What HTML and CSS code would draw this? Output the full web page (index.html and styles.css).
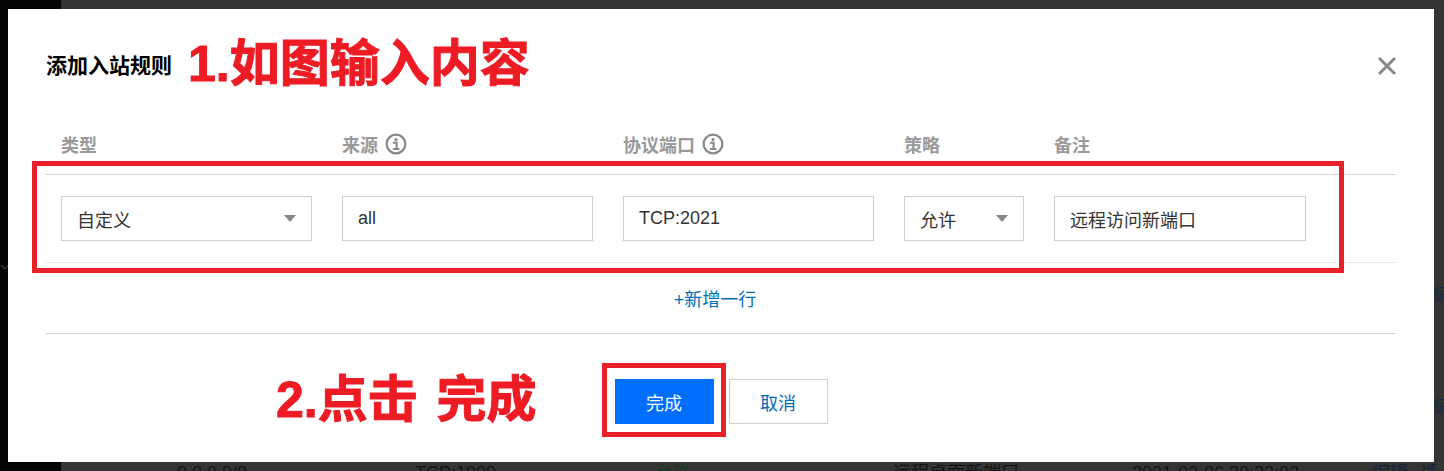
FILE: index.html
```html
<!DOCTYPE html>
<html lang="zh-CN">
<head>
  <meta charset="UTF-8" />
  <title>添加入站规则</title>
  <link rel="stylesheet" href="styles.css">
</head>
<body>
  <div class="page">
    <div class="sidebar">
      <svg class="chevron" width="10" height="6" viewBox="0 0 10 6"><path d="M1 1l4 4 4-4" fill="none" stroke="#3a3a3a" stroke-width="1.2"/></svg>
    </div>
    <div class="content">
      <div class="side-link first">编</div>
      <div class="side-link second">编</div>
      <div class="back-row">
        <span class="cell-ip">0.0.0.0/0</span>
        <span class="cell-port">TCP:1999</span>
        <span class="cell-allow">允许</span>
        <span class="cell-note">远程桌面新端口</span>
        <span class="cell-time">2021-02-06 20:23:03</span>
        <span class="cell-edit">编辑</span>
        <span class="cell-insert">插</span>
      </div>
    </div>
  </div>

  <div class="modal">
    <div class="modal-head">
      <h2>添加入站规则</h2>
      <svg class="close" width="20" height="20" viewBox="0 0 20 20"><path d="M2 2l16 16M18 2L2 18" stroke="#888" stroke-width="3"/></svg>
    </div>

    <div class="rule-grid labels">
      <div class="label">类型</div>
      <div class="label">来源 <svg class="info" width="22" height="22" viewBox="0 0 22 22"><circle cx="11" cy="11" r="9.4" fill="none" stroke="#888" stroke-width="2.2"/><circle cx="11" cy="6.6" r="1.6" fill="#888"/><path d="M8 9.8h3.6v6M8 16h6.4" fill="none" stroke="#888" stroke-width="2"/></svg></div>
      <div class="label">协议端口 <svg class="info" width="22" height="22" viewBox="0 0 22 22"><circle cx="11" cy="11" r="9.4" fill="none" stroke="#888" stroke-width="2.2"/><circle cx="11" cy="6.6" r="1.6" fill="#888"/><path d="M8 9.8h3.6v6M8 16h6.4" fill="none" stroke="#888" stroke-width="2"/></svg></div>
      <div class="label">策略</div>
      <div class="label">备注</div>
    </div>

    <div class="rule-grid inputs">
      <div class="field select">自定义<span class="caret"></span></div>
      <div class="field">all</div>
      <div class="field">TCP:2021</div>
      <div class="field select">允许<span class="caret"></span></div>
      <div class="field">远程访问新端口</div>
    </div>

    <div class="add-row"><a>+新增一行</a></div>

    <div class="modal-foot">
      <button class="btn primary">完成</button>
      <button class="btn">取消</button>
    </div>
  </div>

  <div class="note note-one">1.如图输入内容</div>
  <div class="note note-two">2.点击 完成</div>
  <div class="mark mark-row"></div>
  <div class="mark mark-btn"></div>
</body>
</html>
```

FILE: styles.css
```css
* {
  margin: 0;
  padding: 0;
  box-sizing: border-box;
}

html,
body {
  width: 1444px;
  height: 471px;
  overflow: hidden;
}

body {
  position: relative;
  background: #333;
  font-family: "Liberation Sans", "Noto Sans CJK SC", sans-serif;
  font-size: 18px;
  color: #333;
}

.page {
  display: flex;
  height: 471px;
}

.sidebar {
  position: relative;
  width: 61px;
  background: #050506;
}

.chevron {
  position: absolute;
  left: 0;
  top: 264px;
}

.content {
  position: relative;
  flex: 1;
  background: #343434;
}

.side-link {
  position: absolute;
  left: 1372px;
  color: #1c2a3c;
  font-size: 18px;
  line-height: 20px;
}

.side-link.first {
  top: 285px;
}

.side-link.second {
  top: 397px;
}

.back-row {
  position: absolute;
  left: 0;
  right: 0;
  top: 463px;
  color: #141414;
  font-size: 18px;
  line-height: 20px;
}

.back-row span {
  position: absolute;
  top: 0;
  white-space: nowrap;
}

.cell-ip { left: 116px; }
.cell-port { left: 354px; }
.cell-allow { left: 594px; color: #123a22; }
.cell-note { left: 832px; }
.cell-time { left: 1071px; }
.cell-edit { left: 1311px; color: #12253f; }
.cell-insert { left: 1359px; color: #12253f; }

.modal {
  position: absolute;
  left: 8px;
  top: 9px;
  width: 1426px;
  height: 453px;
  padding: 0 38px;
  background: #fff;
}

.modal-head {
  display: flex;
  align-items: center;
  justify-content: space-between;
  height: 110px;
}

.modal-head h2 {
  font-size: 21px;
  font-weight: 700;
  color: #000;
  margin-top: -1px;
}

.close {
  margin-top: 4px;
  margin-right: -1px;
}

.rule-grid {
  display: grid;
  grid-template-columns: 251px 251px 251px 120px 252px;
  column-gap: 30px;
  padding-left: 15px;
}

.labels {
  height: 56px;
  align-items: start;
  padding-top: 13px;
  border-bottom: 1px solid #d4d4d4;
}

.label {
  display: flex;
  align-items: center;
  gap: 7px;
  height: 24px;
  font-weight: 700;
  color: #999;
}

.inputs {
  height: 88px;
  align-items: center;
  border-bottom: 1px solid #e8e8e8;
}

.field {
  display: flex;
  align-items: center;
  justify-content: space-between;
  height: 45px;
  padding: 0 15px;
  border: 1px solid #d0d0d0;
  color: #333;
  white-space: nowrap;
}

.caret {
  width: 0;
  height: 0;
  border-left: 6px solid transparent;
  border-right: 6px solid transparent;
  border-top: 7px solid #888;
}

.add-row {
  display: flex;
  align-items: center;
  justify-content: center;
  height: 71px;
  padding-right: 12px;
  border-bottom: 1px solid #d4d4d4;
  color: #006eb8;
}

.modal-foot {
  display: flex;
  justify-content: center;
  gap: 15px;
  padding-top: 45px;
}

.btn {
  width: 99px;
  height: 45px;
  border: 1px solid #d0d0d0;
  background: #fff;
  color: #006eb8;
  font: inherit;
}

.btn.primary {
  border: none;
  background: #006eff;
  color: #fff;
}

.note {
  position: absolute;
  font-size: 50px;
  font-weight: 700;
  line-height: 60px;
  color: #ed1c24;
  white-space: nowrap;
  -webkit-text-stroke: 1px #ed1c24;
}

.note-one {
  left: 188px;
  top: 34px;
}

.note-two {
  left: 276px;
  top: 370px;
  word-spacing: 5px;
}

.mark {
  position: absolute;
  border: 5px solid #e8202a;
}

.mark-row {
  left: 32px;
  top: 161px;
  width: 1312px;
  height: 112px;
}

.mark-btn {
  left: 602px;
  top: 363px;
  width: 124px;
  height: 74px;
}
```
